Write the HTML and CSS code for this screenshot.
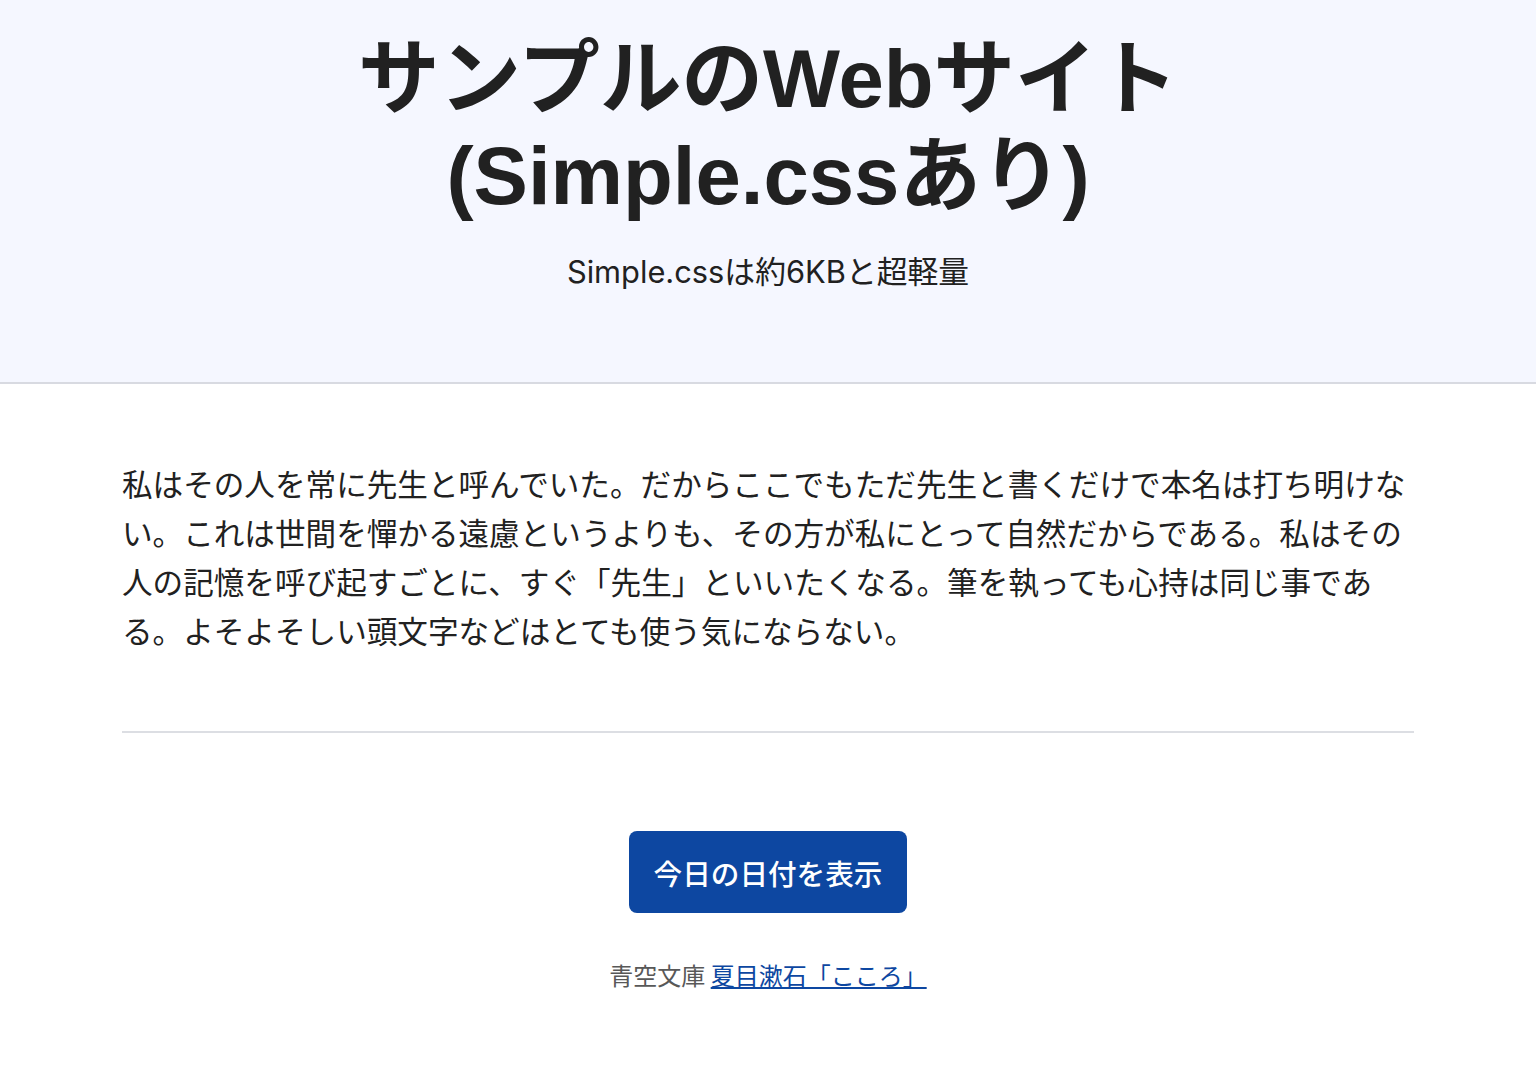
FILE: index.html
```html
<!DOCTYPE html>
<html lang="ja">
  <head>
    <meta charset="UTF-8" />
    <meta name="viewport" content="width=device-width, initial-scale=1.0" />
    <title>サンプルのWebサイト(Simple.cssあり)</title>
    <link rel="stylesheet" href="styles.css">
  </head>
  <body>
    <header class="site-header">
      <h1 class="site-title">サンプルのWebサイト<br />(Simple.cssあり)</h1>
      <p class="site-lead">Simple.cssは約6KBと超軽量</p>
    </header>

    <main class="site-main">
      <p class="story">
        私はその人を常に先生と呼んでいた。だからここでもただ先生と書くだけで本名は打ち明けない。これは世間を憚かる遠慮というよりも、その方が私にとって自然だからである。私はその人の記憶を呼び起すごとに、すぐ「先生」といいたくなる。筆を執っても心持は同じ事である。よそよそしい頭文字などはとても使う気にならない。
      </p>

      <hr class="divider" />

      <div class="action">
        <button class="date-button" type="button">今日の日付を表示</button>
      </div>

      <footer class="site-footer">
        青空文庫 <a href="#" class="source-link">夏目漱石「こころ」</a>
      </footer>
    </main>
  </body>
</html>
```

FILE: styles.css
```css
html,
body {
  padding: 0;
  margin: 0;
}

body {
  background-color: #fff;
  color: #212121;
  font-family: "Noto Sans CJK JP", sans-serif;
}

.site-header {
  background-color: #f5f7ff;
  border-bottom: 2px solid #d8dae1;
  text-align: center;
  padding: 30px 0 88px;
}

.site-title {
  margin: 0;
  font-family: "Liberation Sans", "Noto Sans CJK JP", sans-serif;
  font-size: 81.5px;
  font-weight: bold;
  line-height: 97px;
  color: #212121;
}

.site-lead {
  margin: 25px 0 0;
  font-family: "Inter", "Noto Sans CJK JP", sans-serif;
  font-size: 30.8px;
  line-height: 45px;
  color: #212121;
}

.site-main {
  display: grid;
  grid-template-columns: 1fr min(1292px, 90%) 1fr;
}

.site-main > * {
  grid-column: 2;
}

.story {
  margin: 75px 0 0;
  font-size: 30.6px;
  line-height: 49px;
}

.divider {
  border: none;
  height: 2px;
  margin: 76px 0 0;
  background-color: #dcdee3;
}

.action {
  display: flex;
  justify-content: center;
  margin-top: 98px;
}

.date-button {
  height: 82px;
  padding: 0 25px;
  border: none;
  border-radius: 8px;
  background-color: #0d47a1;
  color: #fff;
  font-family: "Noto Sans CJK JP", sans-serif;
  font-size: 28.6px;
  font-weight: 500;
  cursor: pointer;
}

.site-footer {
  margin-top: 43px;
  text-align: center;
  font-size: 24px;
  line-height: 38px;
  color: #585858;
  padding-bottom: 60px;
}

.source-link {
  color: #0d47a1;
}
```
